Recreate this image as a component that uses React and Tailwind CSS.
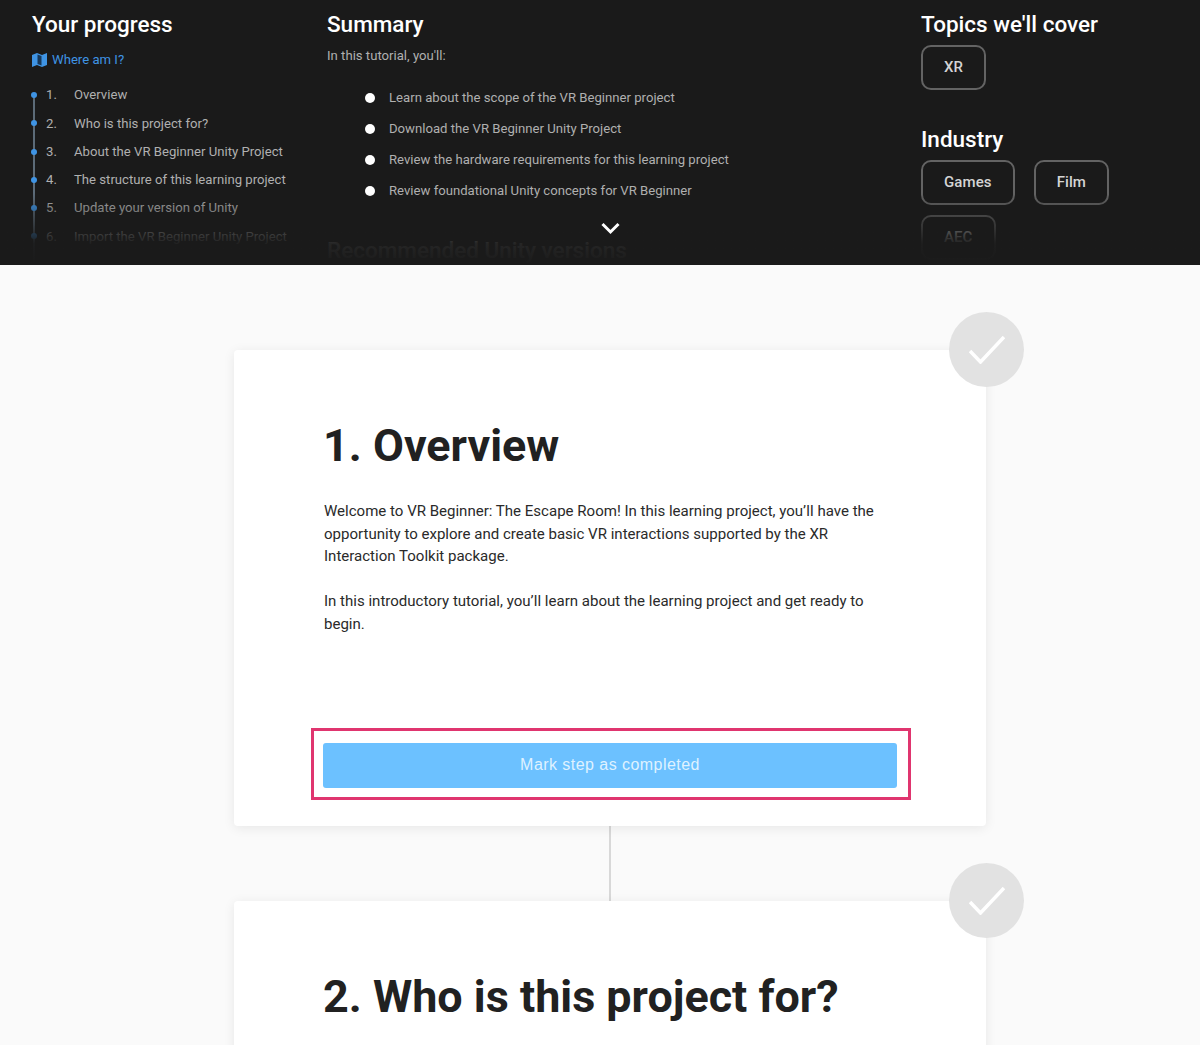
import React from "react";

const steps = [
  "Overview",
  "Who is this project for?",
  "About the VR Beginner Unity Project",
  "The structure of this learning project",
  "Update your version of Unity",
  "Import the VR Beginner Unity Project",
];

const goals = [
  "Learn about the scope of the VR Beginner project",
  "Download the VR Beginner Unity Project",
  "Review the hardware requirements for this learning project",
  "Review foundational Unity concepts for VR Beginner",
];

const Tag = ({ children }) => (
  <span className="flex h-[45px] items-center rounded-[10px] border-2 border-[#636363] px-[21px] text-[15px] font-medium tracking-[0.1px] text-[#d4d4d4]">
    {children}
  </span>
);

const CheckCircle = () => (
  <div className="absolute right-[-38px] top-[-38px] flex h-[75px] w-[75px] items-center justify-center rounded-full bg-[#e2e2e2]">
    <svg width="36" height="28" viewBox="0 0 36 28" fill="none">
      <path d="M1 15 L11.5 26 L35 1" stroke="#ffffff" strokeWidth="3.5" />
    </svg>
  </div>
);

const MapIcon = () => (
  <svg width="15" height="14" viewBox="0 0 15 14" className="shrink-0">
    <path d="M0 2 L5 0 L10 2 L15 0 L15 12 L10 14 L5 12 L0 14 Z" fill="#3f94e4" />
    <path d="M5.5 1.5 L9.5 3 L9.5 12.5 L5.5 11 Z" fill="#17385a" />
  </svg>
);

const App = () => {
  return (
    <div className="h-[1045px] overflow-hidden bg-[#fafafa] font-['Roboto',sans-serif]">
      <header className="relative flex h-[265px] overflow-hidden bg-[#1a1a1a] pl-[32px] pt-[10px]">
        <div className="w-[295px] shrink-0">
          <h2 className="text-[22.5px] font-medium leading-[28px] text-white">Your progress</h2>
          <a className="mt-[12px] flex h-[20px] items-center gap-[5px] text-[13.15px] text-[#3f94e4]">
            <MapIcon />
            Where am I?
          </a>
          <ol className="relative ml-[1px] mt-[11px]">
            <span className="absolute left-0 top-[14px] bottom-0 w-[2px] bg-[#5c6b78]" />
            {steps.map((step, i) => (
              <li key={step} className="relative flex h-[28.25px] items-center text-[13.15px] text-[#b0b0b0]">
                <span className="absolute left-[-2px] h-[6px] w-[6px] rounded-full bg-[#3f94e4]" />
                <span className="ml-[13px] w-[28px]">{i + 1}.</span>
                <span>{step}</span>
              </li>
            ))}
            <li className="h-[28.25px]" />
          </ol>
        </div>

        <div className="w-[594px] shrink-0">
          <h2 className="text-[22.5px] font-medium leading-[28px] text-white">Summary</h2>
          <p className="mt-[8px] text-[13.15px] leading-[20px] text-[#b0b0b0]">In this tutorial, you'll:</p>
          <ul className="ml-[38px] mt-[16px]">
            {goals.map((goal) => (
              <li key={goal} className="flex h-[31px] items-center gap-[14px] text-[13.15px] text-[#b0b0b0]">
                <span className="h-[10px] w-[10px] rounded-full bg-white" />
                {goal}
              </li>
            ))}
          </ul>
          <h2 className="mt-[30px] text-[22.5px] font-medium leading-[28px] text-white">Recommended Unity versions</h2>
        </div>

        <div className="flex-1">
          <h2 className="text-[22.5px] font-medium leading-[28px] text-white">Topics we'll cover</h2>
          <div className="mt-[7px] flex">
            <Tag>XR</Tag>
          </div>
          <h2 className="mt-[35px] text-[22.5px] font-medium leading-[28px] text-white">Industry</h2>
          <div className="mt-[7px] flex w-[210px] flex-wrap gap-x-[19px] gap-y-[10px]">
            <Tag>Games</Tag>
            <Tag>Film</Tag>
            <Tag>AEC</Tag>
          </div>
        </div>

        <div className="absolute inset-x-0 bottom-0 h-[72px] bg-gradient-to-b from-[#1a1a1a00] via-[#1a1a1af2] via-70% to-[#1a1a1a]" />
        <svg className="absolute left-[601px] top-[222px]" width="19" height="13" viewBox="0 0 19 13" fill="none">
          <path d="M1.5 2 L9.5 10 L17.5 2" stroke="#ffffff" strokeWidth="3" />
        </svg>
      </header>

      <main className="flex flex-col items-center pl-[20px] pt-[85px]">
        <section className="relative h-[476px] w-[752px] rounded-[4px] bg-white px-[90px] pt-[67px] shadow-[0_2px_12px_rgba(0,0,0,0.08)]">
          <CheckCircle />
          <h1 className="ml-[-1px] text-[44.9px] font-bold leading-[58px] text-[#212121]">1. Overview</h1>
          <p className="mt-[25px] text-[15.04px] leading-[22.5px] text-[#2a2a2a]">
            Welcome to VR Beginner: The Escape Room! In this learning project, you’ll have the opportunity to explore
            and create basic VR interactions supported by the XR Interaction Toolkit package.
          </p>
          <p className="mt-[22.7px] text-[15.04px] leading-[22.5px] text-[#2a2a2a]">
            In this introductory tutorial, you’ll learn about the learning project and get ready to begin.
          </p>
          <div className="mx-[-13px] mt-[92.8px] w-[600px] border-[3px] border-[#e0356f] pb-[9px] pl-[9px] pt-[12px]">
            <button className="block h-[45px] w-[574px] rounded-[3px] bg-[#6cc1ff] font-['Liberation_Sans',sans-serif] text-[16px] tracking-[0.45px] text-[#dff2ff]">
              Mark step as completed
            </button>
          </div>
        </section>
        <div className="h-[75px] w-[2px] bg-[#d8d8d8]" />
        <section className="relative h-[300px] w-[752px] rounded-[4px] bg-white px-[90px] pt-[67px] shadow-[0_2px_12px_rgba(0,0,0,0.08)]">
          <CheckCircle />
          <h1 className="ml-[-1px] text-[44.9px] font-bold leading-[58px] text-[#212121]">2. Who is this project for?</h1>
        </section>
      </main>
    </div>
  );
};

export default App;
